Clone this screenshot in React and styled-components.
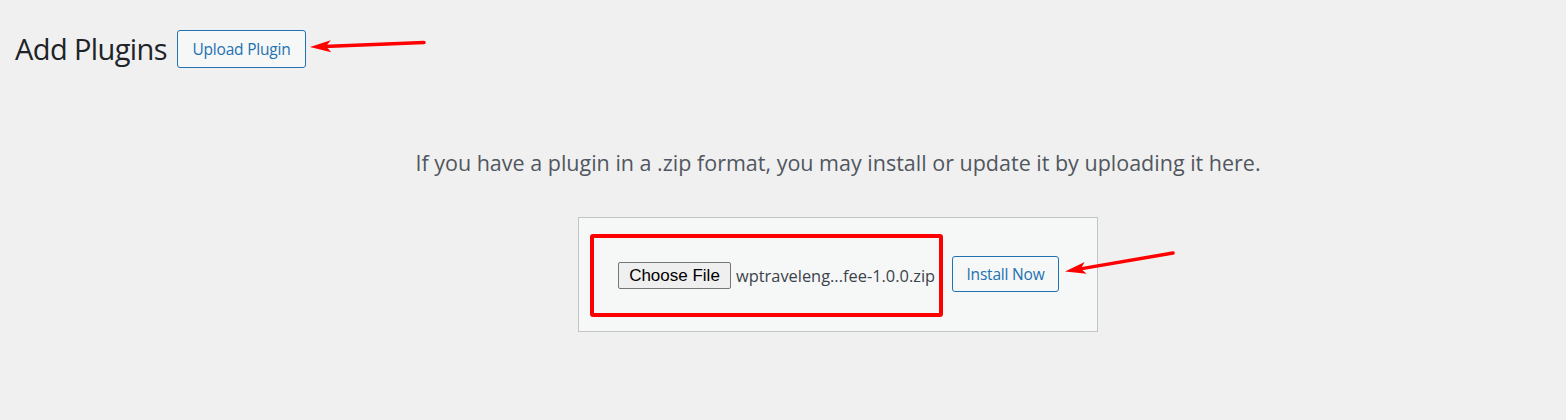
import React from 'react';
import styled, { createGlobalStyle } from 'styled-components';

const GlobalStyle = createGlobalStyle`
  html, body {
    margin: 0;
    padding: 0;
    background: #f0f0f1;
  }
  body {
    font-family: 'Open Sans', 'Noto Sans', 'Liberation Sans', sans-serif;
    color: #3c434a;
  }
`;

const Page = styled.div`
  position: relative;
  min-height: 420px;
  overflow: hidden;
`;

const HeaderRow = styled.div`
  display: flex;
  align-items: center;
  gap: 10px;
  padding: 30px 15px 0;
`;

const Title = styled.h1`
  margin: 0;
  font-size: 29px;
  line-height: 38px;
  font-weight: 400;
  letter-spacing: -0.6px;
  color: #1d2327;
`;

const OutlineButton = styled.button`
  box-sizing: border-box;
  display: inline-flex;
  align-items: center;
  justify-content: center;
  width: ${(p) => p.$w}px;
  height: ${(p) => p.$h}px;
  padding: 0;
  border: 1px solid #2271b1;
  border-radius: 3px;
  background: #f6f7f7;
  color: #2271b1;
  font-family: 'Open Sans', 'Noto Sans', sans-serif;
  font-size: 15.5px;
  letter-spacing: -0.2px;
  cursor: pointer;
`;

const UploadSection = styled.section`
  padding-left: 110px;
  margin-top: 80px;
`;

const Help = styled.p`
  margin: 0;
  text-align: center;
  font-size: 21.5px;
  line-height: 30px;
  color: #50575e;
`;

const UploadBox = styled.form`
  box-sizing: border-box;
  display: flex;
  align-items: center;
  width: 520px;
  margin: 39px auto 0;
  padding: 16px 0 14px 11px;
  border: 1px solid #c3c4c7;
  background: #f6f7f7;
`;

const Highlight = styled.div`
  box-sizing: border-box;
  display: flex;
  align-items: center;
  gap: 5px;
  width: 353px;
  height: 83px;
  padding-left: 24px;
  border: 4px solid #ff0000;
  border-radius: 3px;
`;

const ChooseButton = styled.button`
  box-sizing: border-box;
  width: 113px;
  height: 27px;
  padding: 0;
  border: 1px solid #767676;
  border-radius: 2px;
  background: #efefef;
  color: #000;
  font-family: 'Liberation Sans', Arial, sans-serif;
  font-size: 17px;
  cursor: pointer;
`;

const FileName = styled.span`
  font-size: 16.4px;
  color: #3c434a;
  white-space: nowrap;
`;

const InstallWrap = styled.div`
  margin-left: 9px;
  margin-top: -3px;
`;

const Overlay = styled.svg`
  position: absolute;
  top: 0;
  left: 0;
  pointer-events: none;
`;

// red annotation arrow, tip at (x2, y2)
const Arrow = ({ x1, y1, x2, y2 }) => {
  const dx = x1 - x2;
  const dy = y1 - y2;
  const len = Math.sqrt(dx * dx + dy * dy);
  const ux = dx / len;
  const uy = dy / len;
  const headLen = 21;
  const half = 6;
  const bx = x2 + ux * headLen;
  const by = y2 + uy * headLen;
  const points = [
    `${x2},${y2}`,
    `${bx - uy * half},${by + ux * half}`,
    `${x2 + ux * (headLen - 5)},${y2 + uy * (headLen - 5)}`,
    `${bx + uy * half},${by - ux * half}`,
  ].join(' ');
  return (
    <g>
      <line
        x1={x1}
        y1={y1}
        x2={x2 + ux * 14}
        y2={y2 + uy * 14}
        stroke="#ff0000"
        strokeWidth="3.5"
        strokeLinecap="round"
      />
      <polygon points={points} fill="#ff0000" />
    </g>
  );
};

export default function App() {
  return (
    <Page>
      <GlobalStyle />
      <HeaderRow>
        <Title>Add Plugins</Title>
        <OutlineButton $w={129} $h={38}>Upload Plugin</OutlineButton>
      </HeaderRow>

      <UploadSection>
        <Help>
          If you have a plugin in a .zip format, you may install or update it by uploading it here.
        </Help>
        <UploadBox onSubmit={(e) => e.preventDefault()}>
          <Highlight>
            <ChooseButton type="button">Choose File</ChooseButton>
            <FileName>wptraveleng...fee-1.0.0.zip</FileName>
          </Highlight>
          <InstallWrap>
            <OutlineButton $w={107} $h={36} type="submit">
              Install Now
            </OutlineButton>
          </InstallWrap>
        </UploadBox>
      </UploadSection>

      <Overlay width="1566" height="420" viewBox="0 0 1566 420">
        <Arrow x1={424} y1={42.5} x2={310} y2={47} />
        <Arrow x1={1173} y1={253} x2={1065} y2={271.5} />
      </Overlay>
    </Page>
  );
}
